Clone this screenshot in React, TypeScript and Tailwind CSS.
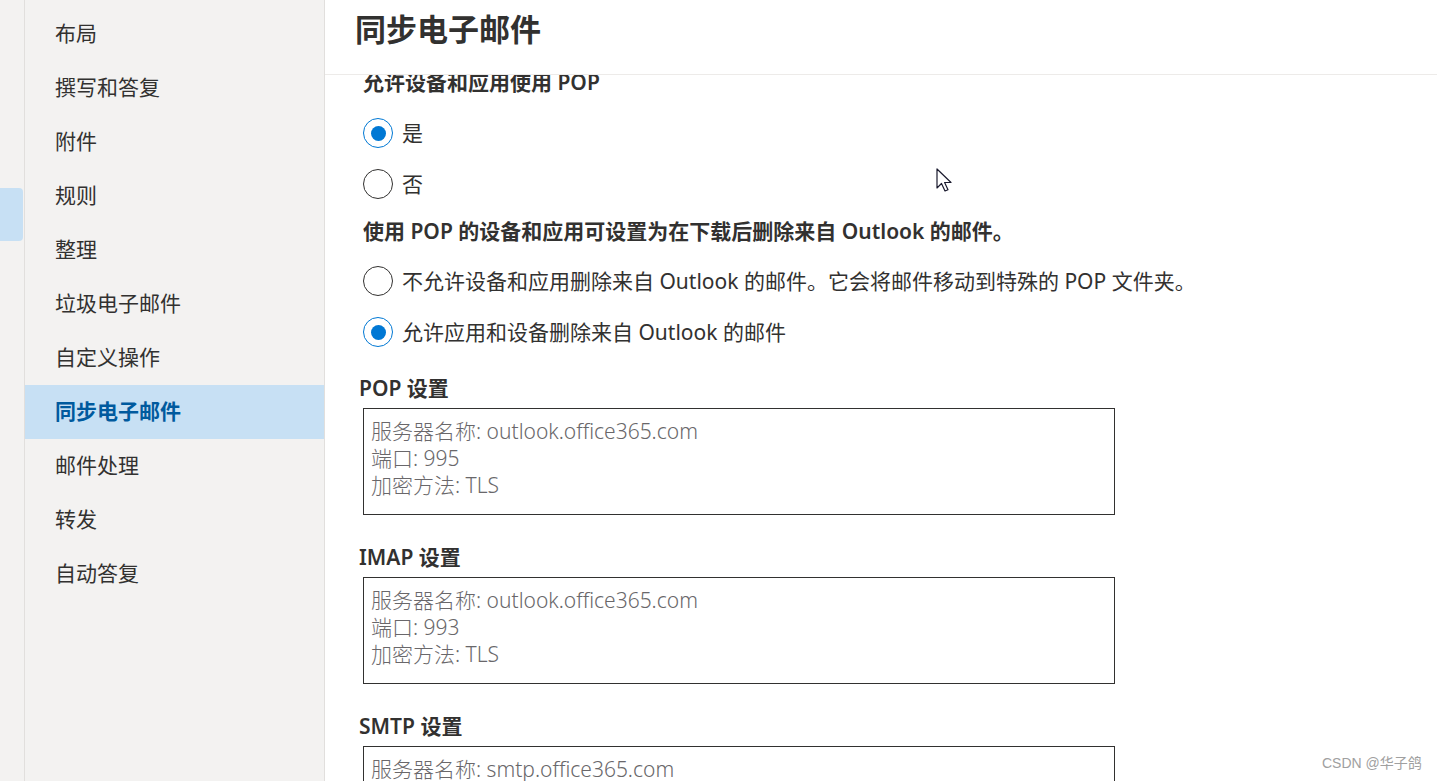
import React from 'react';

const NAV_ITEMS = [
  '布局',
  '撰写和答复',
  '附件',
  '规则',
  '整理',
  '垃圾电子邮件',
  '自定义操作',
  '同步电子邮件',
  '邮件处理',
  '转发',
  '自动答复',
];

const SELECTED = '同步电子邮件';

const FONT = { fontFamily: '"Noto Sans", "Noto Sans CJK SC", sans-serif' };

const Radio = ({ checked, label, className = '' }: { checked: boolean; label: string; className?: string }) => (
  <div className={`flex h-[30px] items-center gap-[9px] ${className}`}>
    <span
      className={`flex h-[30px] w-[30px] shrink-0 items-center justify-center rounded-full border ${
        checked ? 'border-[#0078d4]' : 'border-[#323130]'
      }`}
    >
      {checked && <span className="h-[15px] w-[15px] rounded-full bg-[#0078d4]" />}
    </span>
    <span className="text-[21px] leading-[28px] text-[#323130]">{label}</span>
  </div>
);

const ServerBox = ({ lines }: { lines: string[] }) => (
  <div className="mt-[6px] h-[107px] w-[752px] border border-[#323130] px-[7px] pt-[9px]">
    {lines.map((line) => (
      <div key={line} className="text-[21px] font-light leading-[27px] text-[#69676a]">
        {line}
      </div>
    ))}
  </div>
);

const SectionTitle = ({ children, className = '' }: { children: React.ReactNode; className?: string }) => (
  <div className={`-ml-[4px] h-[28px] text-[21px] font-semibold leading-[28px] text-[#323130] ${className}`}>
    {children}
  </div>
);

export default function App() {
  return (
    <div className="relative flex h-[781px] w-[1437px] overflow-hidden bg-white" style={FONT}>
      {/* far-left rail */}
      <div className="w-[25px] shrink-0 border-r border-[#e1dfdd] bg-[#f3f2f1] pt-[188px]">
        <div className="h-[53px] w-[23px] rounded-r-[4px] bg-[#c7e0f4]" />
      </div>

      {/* settings nav */}
      <nav className="w-[300px] shrink-0 border-r border-[#e1dfdd] bg-[#f3f2f1] pt-[7px]">
        {NAV_ITEMS.map((item) => {
          const active = item === SELECTED;
          return (
            <div
              key={item}
              className={`flex h-[54px] items-center pl-[30px] text-[21px] ${
                active ? 'bg-[#c7e0f4] font-semibold text-[#005a9e]' : 'text-[#323130]'
              }`}
            >
              {item}
            </div>
          );
        })}
      </nav>

      {/* main */}
      <main className="flex min-w-0 flex-1 flex-col">
        <header className="flex h-[75px] shrink-0 items-start border-b border-[#edebe9] pl-[30px] pt-[8px]">
          <h1 className="text-[31px] font-bold leading-[42px] text-[#323130]">同步电子邮件</h1>
        </header>

        <div className="flex-1 overflow-hidden pl-[38px]">
          <div className="-mt-[7px] flex flex-col">
            <div className="h-[28px] text-[21px] font-semibold leading-[28px] text-[#323130]">
              允许设备和应用使用 POP
            </div>
            <Radio checked label="是" className="mt-[22px]" />
            <Radio checked={false} label="否" className="mt-[21px]" />

            <div className="mt-[18px] h-[28px] text-[21px] font-semibold leading-[28px] text-[#323130]">
              使用 POP 的设备和应用可设置为在下载后删除来自 Outlook 的邮件。
            </div>
            <Radio
              checked={false}
              label="不允许设备和应用删除来自 Outlook 的邮件。它会将邮件移动到特殊的 POP 文件夹。"
              className="mt-[21px]"
            />
            <Radio checked label="允许应用和设备删除来自 Outlook 的邮件" className="mt-[21px]" />

            <SectionTitle className="mt-[27px]">POP 设置</SectionTitle>
            <ServerBox lines={['服务器名称: outlook.office365.com', '端口: 995', '加密方法: TLS']} />

            <SectionTitle className="mt-[28px]">IMAP 设置</SectionTitle>
            <ServerBox lines={['服务器名称: outlook.office365.com', '端口: 993', '加密方法: TLS']} />

            <SectionTitle className="mt-[28px]">SMTP 设置</SectionTitle>
            <ServerBox lines={['服务器名称: smtp.office365.com', '端口: 587', '加密方法: STARTTLS']} />
          </div>
        </div>
      </main>

      {/* mouse pointer */}
      <svg className="absolute left-[936px] top-[168px]" width="20" height="28" viewBox="0 0 20 28">
        <path
          d="M1 1 L1 20 L5.5 15.5 L9 23 L12 21.8 L8.6 14.5 L15 14.5 Z"
          fill="#ffffff"
          stroke="#1a1a2e"
          strokeWidth="1.2"
          strokeLinejoin="round"
        />
      </svg>

      {/* watermark */}
      <div
        className="absolute left-[1322px] top-[754px] text-[14px] leading-[18px] text-[#a0a0a0]"
        style={{ fontFamily: '"Liberation Sans", "Noto Sans CJK SC", sans-serif' }}
      >
        CSDN @华子鸽
      </div>
    </div>
  );
}
